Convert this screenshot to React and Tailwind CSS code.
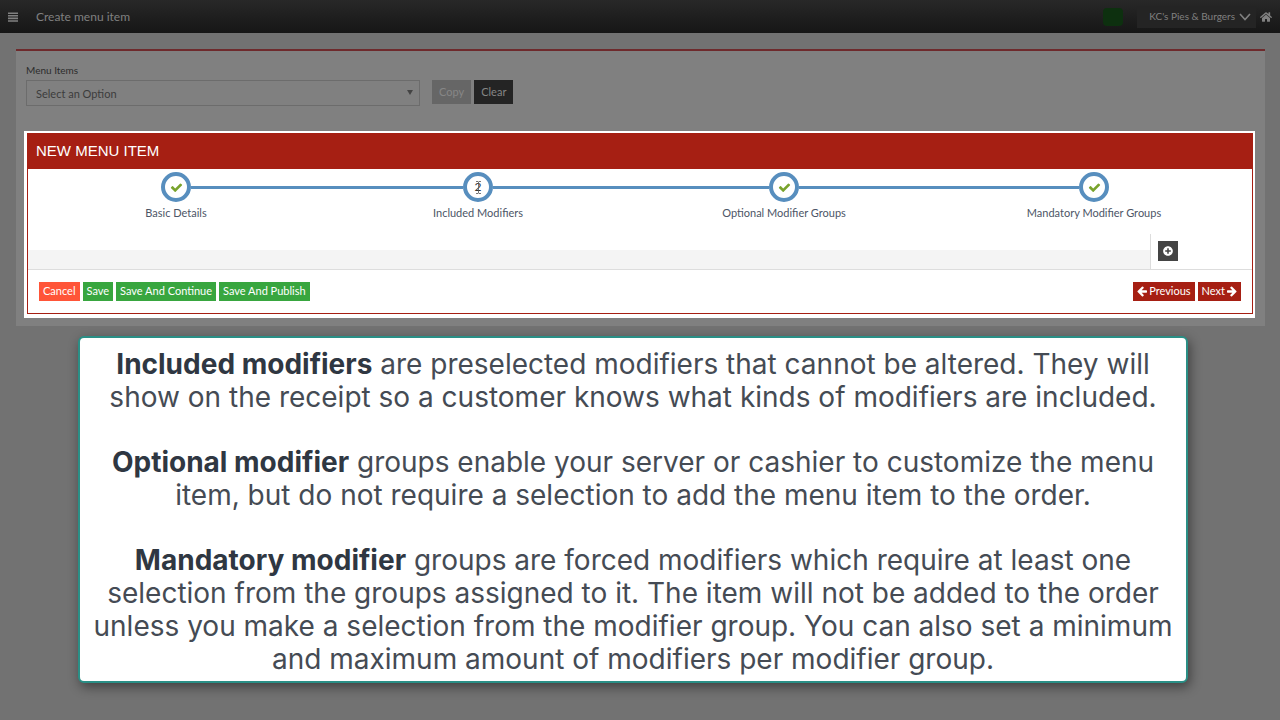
import React from 'react';
import { FaHome, FaPlusCircle } from 'react-icons/fa';

const steps = [
    { label: 'Basic Details', done: true },
    { label: 'Included Modifiers', done: false },
    { label: 'Optional Modifier Groups', done: true },
    { label: 'Mandatory Modifier Groups', done: true },
];

const notes = [
    {
        term: 'Included modifiers',
        text: 'are preselected modifiers that cannot be altered. They will show on the receipt so a customer knows what kinds of modifiers are included.',
    },
    {
        term: 'Optional modifier',
        text: 'groups enable your server or cashier to customize the menu item, but do not require a selection to add the menu item to the order.',
    },
    {
        term: 'Mandatory modifier',
        text: 'groups are forced modifiers which require at least one selection from the groups assigned to it. The item will not be added to the order unless you make a selection from the modifier group. You can also set a minimum and maximum amount of modifiers per modifier group.',
    },
];

const CheckIcon = () => (
    <svg className="h-[13px] w-[13px] text-[#79a32c]" viewBox="0 0 1792 1792" fill="currentColor">
        <path d="M1671 566q0 40-28 68l-724 724-136 136q-28 28-68 28t-68-28l-136-136-362-362q-28-28-28-68t28-68l136-136q28-28 68-28t68 28l294 295 656-657q28-28 68-28t68 28l136 136q28 28 28 68z" />
    </svg>
);

const ArrowIcon = ({ className = '' }) => (
    <svg className={`h-[11px] w-[10px] ${className}`} viewBox="0 128 1536 1664" fill="currentColor">
        <path d="M1472 960q0 54-37 91l-651 651q-39 37-91 37-51 0-90-37l-75-75q-38-38-38-91t38-91l293-293h-704q-52 0-84.5-37.5t-32.5-90.5v-128q0-53 32.5-90.5t84.5-37.5h704l-293-294q-38-36-38-90t38-90l75-75q38-38 90-38 53 0 91 38l651 651q37 35 37 90z" />
    </svg>
);

const TopBar = () => (
    <header className="flex h-[33px] items-center justify-between bg-linear-to-b from-[#282828] to-[#161616] px-2 text-[#808080]">
        <div className="flex items-center gap-[18px]">
            <button type="button" aria-label="Toggle navigation">
                <svg className="h-[10px] w-[10px]" viewBox="0 0 10 10" stroke="currentColor" strokeWidth="1.6">
                    <path d="M0 1.2h10M0 3.8h10M0 6.4h10M0 9h10" />
                </svg>
            </button>
            <h1 className="text-[12px] leading-4">Create menu item</h1>
        </div>
        <div className="flex items-center">
            <span className="mr-[14px] h-[18px] w-5 rounded-sm bg-[#0d300f]" />
            <button type="button" className="mr-1 flex h-[22px] items-center gap-1 bg-[#242424] pr-[5px] pl-3 text-[10px]">
                KC's Pies &amp; Burgers
                <svg className="h-[8px] w-[12px]" viewBox="0 0 12 8" fill="none" stroke="currentColor" strokeWidth="1.6">
                    <path d="M1 1l5 5.5L11 1" />
                </svg>
            </button>
            <a href="#home" aria-label="Home">
                <FaHome className="h-[12px] w-[12px]" />
            </a>
        </div>
    </header>
);

const CopyForm = () => (
    <div className="flex items-end gap-3 px-[10px]">
        <div className="w-[394px]">
            <label htmlFor="menu-items" className="block text-[10px] leading-[14px] text-[#2c2c2c]">
                Menu Items
            </label>
            <div className="relative mt-[3px]">
                <select
                    id="menu-items"
                    className="block h-[26px] w-full appearance-none border border-[#6c6c6c] bg-[#808080] px-[9px] pt-[2px] text-[11px] text-[#3c3c3c]"
                >
                    <option>Select an Option</option>
                </select>
                <svg className="pointer-events-none absolute top-[10px] right-[7px] h-[5px] w-[6px]" viewBox="0 0 6 5">
                    <path d="M0 0h6L3 5z" fill="#444444" />
                </svg>
            </div>
        </div>
        <div className="mb-[2px] flex gap-[3px] text-[11px]">
            <button type="button" className="h-6 bg-[#666666] px-[7px] text-[#868686]">
                Copy
            </button>
            <button type="button" className="h-6 bg-[#242424] px-[7px] text-[#868686]">
                Clear
            </button>
        </div>
    </div>
);

const Step = ({ number, label, done, first, last }) => (
    <li className="flex flex-col items-center">
        <div className="flex w-full items-center">
            <span className={first ? 'h-[3px] flex-1' : 'h-[3px] flex-1 bg-[#578ebe]'} />
            <span className="relative flex h-[30px] w-[30px] items-center justify-center rounded-full border-4 border-[#578ebe] text-[12px] text-[#333333]">
                {done ? <CheckIcon /> : number}
                {/* Text caret resting on the current step */}
                {!done && (
                    <svg className="absolute h-[13px] w-[7px]" viewBox="0 0 7 13" fill="none" stroke="#555555" strokeWidth="0.8">
                        <path d="M1 .5h2l.5.5.5-.5h2M3.5 1v11M1 12.5h2l.5-.5.5.5h2" />
                    </svg>
                )}
            </span>
            <span className={last ? 'h-[3px] flex-1' : 'h-[3px] flex-1 bg-[#578ebe]'} />
        </div>
        <span className="mt-[3px] text-[11px] leading-4 text-[#4c5566]">{label}</span>
    </li>
);

const ActionButton = ({ color, children }) => (
    <button type="button" className={`flex h-[19px] items-center gap-[2px] px-1 text-[11px] text-white ${color}`}>
        {children}
    </button>
);

const MenuItemWizard = () => (
    <section className="mt-[25px] mr-[10px] ml-2 bg-white pt-[2px] pr-[2px] pb-1 pl-[3px]">
        <div className="border border-[#a61f13]">
            <h2 className="bg-[#a61f13] pt-[5px] pb-[6px] pl-2 font-['Liberation_Sans',Arial,sans-serif] text-[15px] leading-6 text-white">
                NEW MENU ITEM
            </h2>

            <ol className="grid grid-cols-[296fr_308fr_304fr_316fr] pt-[3px]">
                {steps.map((step, index) => (
                    <Step
                        key={step.label}
                        number={index + 1}
                        label={step.label}
                        done={step.done}
                        first={index === 0}
                        last={index === steps.length - 1}
                    />
                ))}
            </ol>

            {/* Modifier row */}
            <div className="mt-[13px] flex h-9 border-b border-[#dddddd]">
                <div className="flex flex-1 items-end border-r border-[#dddddd]">
                    <div className="h-[19px] w-full bg-[#f4f4f4]" />
                </div>
                <div className="w-[101px] pt-[7px] pl-[7px]">
                    <button
                        type="button"
                        aria-label="Add modifier"
                        className="flex h-5 w-5 items-center justify-center bg-[#444444] text-white"
                    >
                        <FaPlusCircle className="h-[10px] w-[10px]" />
                    </button>
                </div>
            </div>

            <div className="flex justify-between pt-3 pr-[11px] pb-3 pl-[11px]">
                <div className="flex gap-[3px]">
                    <ActionButton color="bg-[#ff5538]">Cancel</ActionButton>
                    <ActionButton color="bg-[#38a63f]">Save</ActionButton>
                    <ActionButton color="bg-[#38a63f]">Save And Continue</ActionButton>
                    <ActionButton color="bg-[#38a63f]">Save And Publish</ActionButton>
                </div>
                <div className="flex gap-[3px]">
                    <ActionButton color="bg-[#a61f13]">
                        <ArrowIcon className="rotate-180" />
                        Previous
                    </ActionButton>
                    <ActionButton color="bg-[#a61f13]">
                        Next
                        <ArrowIcon />
                    </ActionButton>
                </div>
            </div>
        </div>
    </section>
);

const HelpNotes = () => (
    <aside className="mt-[10px] mr-[92px] ml-[78px] flex flex-col gap-8 rounded-md border-2 border-[#2a8f86] bg-white px-1 pt-[10px] pb-[5px] text-center font-[Inter,sans-serif] text-[28px] leading-[33px] text-[#454b54] shadow-[2px_4px_12px_rgba(0,0,0,0.45)]">
        {notes.map((note) => (
            <p key={note.term}>
                <strong className="font-bold text-[#2f3742]">{note.term}</strong> {note.text}
            </p>
        ))}
    </aside>
);

const App = () => {
    return (
        <div className="min-h-screen bg-[#727272] pb-9 font-[Lato,sans-serif]">
            <TopBar />
            <main>
                <div className="mt-4 mr-[15px] ml-4 border-t-2 border-[#6e2a2c] bg-[#808080] pt-3 pb-2">
                    <CopyForm />
                    <MenuItemWizard />
                </div>
                <HelpNotes />
            </main>
        </div>
    );
};

export default App;
